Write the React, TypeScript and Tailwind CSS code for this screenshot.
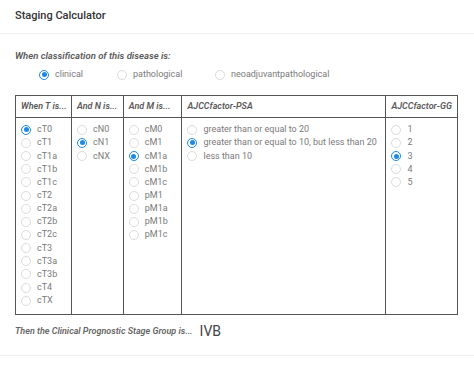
import React from 'react';

/** 单选圆点 */
function Radio({ checked }: { checked?: boolean }) {
  return checked ? (
    <span className="inline-flex h-[10px] w-[10px] shrink-0 items-center justify-center rounded-full border-[1.5px] border-[#1e88e5] bg-white">
      <span className="h-[5px] w-[5px] rounded-full bg-[#1e88e5]" />
    </span>
  ) : (
    <span className="inline-block h-[10px] w-[10px] shrink-0 rounded-full border border-[#dcdcdc] bg-white" />
  );
}

function Option({ label, checked }: { label: string; checked?: boolean }) {
  return (
    <div className="flex h-[13.15px] items-center gap-[6px] whitespace-nowrap">
      <Radio checked={checked} />
      <span className="text-[9px] leading-none text-[#7a7a7a]">{label}</span>
    </div>
  );
}

const COLUMNS: { title: string; width: string; items: string[]; picked: string }[] = [
  {
    title: 'When T is...',
    width: 'w-[55px]',
    items: ['cT0', 'cT1', 'cT1a', 'cT1b', 'cT1c', 'cT2', 'cT2a', 'cT2b', 'cT2c', 'cT3', 'cT3a', 'cT3b', 'cT4', 'cTX'],
    picked: 'cT0',
  },
  { title: 'And N is...', width: 'w-[52px]', items: ['cN0', 'cN1', 'cNX'], picked: 'cN1' },
  {
    title: 'And M is...',
    width: 'w-[59px]',
    items: ['cM0', 'cM1', 'cM1a', 'cM1b', 'cM1c', 'pM1', 'pM1a', 'pM1b', 'pM1c'],
    picked: 'cM1a',
  },
  {
    title: 'AJCCfactor-PSA',
    width: 'w-[205px]',
    items: ['greater than or equal to 20', 'greater than or equal to 10, but less than 20', 'less than 10'],
    picked: 'greater than or equal to 10, but less than 20',
  },
  { title: 'AJCCfactor-GG', width: 'w-[72px]', items: ['1', '2', '3', '4', '5'], picked: '3' },
];

export default function App() {
  return (
    <div className="h-[387px] w-[474px] bg-white font-['Roboto','Liberation_Sans',sans-serif]">
      {/* 标题 */}
      <div className="flex h-[34px] items-center border-b border-[#eeeeee] px-[15px]">
        <span className="text-[11px] font-medium text-[#333]">Staging Calculator</span>
      </div>

      <div className="border-b border-[#eeeeee] px-[15px] pb-[13px]">
        <div className="pt-[15px] text-[9.5px] font-semibold italic text-[#595959]">
          When classification of this disease is:
        </div>

        {/* 分类选择 */}
        <div className="mt-[5px] flex h-[13px] items-center pl-[24px]">
          <div className="flex w-[78px] items-center gap-[6px]">
            <Radio checked />
            <span className="text-[9px] text-[#7a7a7a]">clinical</span>
          </div>
          <div className="flex w-[98px] items-center gap-[6px]">
            <Radio />
            <span className="text-[9px] text-[#7a7a7a]">pathological</span>
          </div>
          <div className="flex items-center gap-[6px]">
            <Radio />
            <span className="text-[9px] text-[#7a7a7a]">neoadjuvantpathological</span>
          </div>
        </div>

        {/* 分期表 */}
        <div className="mt-[14px] flex w-[443px] border border-[#555]">
          {COLUMNS.map((col, i) => (
            <div key={col.title} className={`${col.width} flex flex-col ${i > 0 ? 'border-l border-[#555]' : ''}`}>
              <div className="flex h-[22px] items-center border-b border-[#555] px-[5px] text-[9px] font-semibold italic text-[#595959] whitespace-nowrap">
                {col.title}
              </div>
              <div className="flex flex-col px-[5px] pt-[5px] pb-[7px]">
                {col.items.map((it) => (
                  <Option key={it} label={it} checked={it === col.picked} />
                ))}
              </div>
            </div>
          ))}
        </div>

        {/* 结果 */}
        <div className="mt-[6px] flex items-center gap-[7px]">
          <span className="text-[9px] font-semibold italic text-[#666]">
            Then the Clinical Prognostic Stage Group is...
          </span>
          <span className="text-[14px] text-[#444]">IVB</span>
        </div>
      </div>
    </div>
  );
}
